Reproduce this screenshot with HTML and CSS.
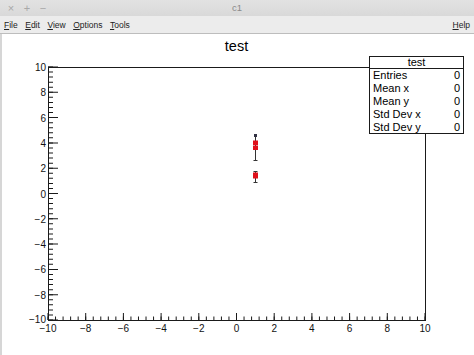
FILE: index.html
```html
<!DOCTYPE html>
<html>
<head>
<meta charset="utf-8">
<link rel="stylesheet" href="styles.css">
</head>
<body>
<div class="window">
  <div class="titlebar">
    <div class="controls"><span class="ctl">×</span><span class="ctl">+</span><span class="ctl">−</span></div>
    <div class="title">c1</div>
    <div></div>
  </div>
  <div class="menubar">
    <span class="item"><u>F</u>ile</span>
    <span class="item"><u>E</u>dit</span>
    <span class="item"><u>V</u>iew</span>
    <span class="item"><u>O</u>ptions</span>
    <span class="item"><u>T</u>ools</span>
    <span class="spacer"></span>
    <span class="item"><u>H</u>elp</span>
  </div>
  <div class="canvas">
    <svg class="plot" width="472" height="321" viewBox="2 34 472 321" xmlns="http://www.w3.org/2000/svg">
      <rect x="2" y="34" width="472" height="321" fill="#fff"/>
      <text class="ptitle" x="236.5" y="51" text-anchor="middle">test</text>
      <!-- frame -->
      <rect x="48.5" y="67.5" width="377" height="253" fill="none" stroke="#1a1a1a" stroke-width="1"/>
      <!-- x axis ticks -->
      <line x1="47.5" y1="318.25" x2="425.6" y2="318.25" stroke="#1a1a1a" stroke-width="3.5" stroke-dasharray="1 6.54"/>
      <line x1="47.5" y1="316.5" x2="425.6" y2="316.5" stroke="#1a1a1a" stroke-width="7" stroke-dasharray="1 36.7"/>
      <!-- y axis ticks -->
      <line x1="50.5" y1="66.5" x2="50.5" y2="320.6" stroke="#1a1a1a" stroke-width="5" stroke-dasharray="1 4.06"/>
      <line x1="53" y1="66.5" x2="53" y2="320.6" stroke="#1a1a1a" stroke-width="10" stroke-dasharray="1 24.3"/>
      <!-- x labels -->
      <g class="lbl" text-anchor="middle">
        <text x="48" y="332">−10</text>
        <text x="85.7" y="332">−8</text>
        <text x="123.4" y="332">−6</text>
        <text x="161.1" y="332">−4</text>
        <text x="198.8" y="332">−2</text>
        <text x="236.5" y="332">0</text>
        <text x="274.2" y="332">2</text>
        <text x="311.9" y="332">4</text>
        <text x="349.6" y="332">6</text>
        <text x="387.3" y="332">8</text>
        <text x="425" y="332">10</text>
      </g>
      <!-- y labels -->
      <g class="lbl" text-anchor="end">
        <text x="46" y="71">10</text>
        <text x="46" y="96.3">8</text>
        <text x="46" y="121.6">6</text>
        <text x="46" y="146.9">4</text>
        <text x="46" y="172.2">2</text>
        <text x="46" y="197.5">0</text>
        <text x="46" y="222.8">−2</text>
        <text x="46" y="248.1">−4</text>
        <text x="46" y="273.4">−6</text>
        <text x="46" y="298.7">−8</text>
        <text x="46" y="322.5">−10</text>
      </g>
      <!-- data points -->
      <g stroke="#333" stroke-width="1">
        <line x1="255.5" y1="135" x2="255.5" y2="160.5"/>
        <line x1="253.5" y1="160.5" x2="257.5" y2="160.5"/>
        <line x1="255.5" y1="171" x2="255.5" y2="183"/>
        <line x1="253.5" y1="171.5" x2="257.5" y2="171.5"/>
        <line x1="253.5" y1="182.5" x2="257.5" y2="182.5"/>
      </g>
      <rect x="254" y="134" width="3" height="3" fill="#334"/>
      <rect x="253" y="140.5" width="5" height="4.5" fill="#e0101a"/>
      <rect x="253" y="145.5" width="5" height="4.5" fill="#e0101a"/>
      <rect x="253" y="172.5" width="5" height="6" fill="#e0101a"/>
      <!-- stats box -->
      <rect x="369.5" y="56.5" width="94" height="77" fill="#fff" stroke="#1a1a1a" stroke-width="1"/>
      <line x1="369.5" y1="68.5" x2="463.5" y2="68.5" stroke="#1a1a1a" stroke-width="1"/>
      <g class="stat">
        <text x="416.5" y="66" text-anchor="middle">test</text>
        <text x="373" y="79">Entries</text>
        <text x="373" y="92">Mean x</text>
        <text x="373" y="105">Mean y</text>
        <text x="373" y="118">Std Dev x</text>
        <text x="373" y="131">Std Dev y</text>
        <g text-anchor="end">
          <text x="460" y="79">0</text>
          <text x="460" y="92">0</text>
          <text x="460" y="105">0</text>
          <text x="460" y="118">0</text>
          <text x="460" y="131">0</text>
        </g>
      </g>
    </svg>
  </div>
</div>
</body>
</html>
```

FILE: styles.css
```css
html, body {
  margin: 0;
  padding: 0;
  background: #fff;
}
.window {
  width: 474px;
  height: 355px;
  display: flex;
  flex-direction: column;
  overflow: hidden;
  font-family: "Liberation Sans", Arial, sans-serif;
}
.titlebar {
  height: 16px;
  flex: none;
  display: grid;
  grid-template-columns: 1fr auto 1fr;
  align-items: center;
  background: linear-gradient(#e2e2e2, #d9d9d9);
}
.controls {
  display: flex;
  padding-left: 3px;
}
.ctl {
  width: 16px;
  text-align: center;
  font-size: 11px;
  line-height: 16px;
  color: #a8a8a8;
}
.title {
  font-size: 9.5px;
  color: #8a8a8a;
  line-height: 16px;
}
.menubar {
  height: 17px;
  flex: none;
  display: flex;
  align-items: center;
  gap: 7.5px;
  padding: 0 4px;
  background: #ececec;
  border-bottom: 1px solid #bdbdbd;
  font-size: 8.5px;
  color: #222;
}
.item u {
  text-decoration: underline;
  text-underline-offset: 1px;
}
.spacer {
  flex: 1;
}
.canvas {
  flex: 1;
  display: flex;
  border-left: 2px solid #d6d6d6;
  background: #fff;
}
.plot {
  display: block;
}
.ptitle {
  font-family: "Liberation Sans", Arial, sans-serif;
  font-size: 14.5px;
  fill: #000;
}
.lbl text {
  font-family: "Liberation Sans", Arial, sans-serif;
  font-size: 10px;
  fill: #111;
}
.stat text {
  font-family: "Liberation Sans", Arial, sans-serif;
  font-size: 11px;
  fill: #000;
}
```
